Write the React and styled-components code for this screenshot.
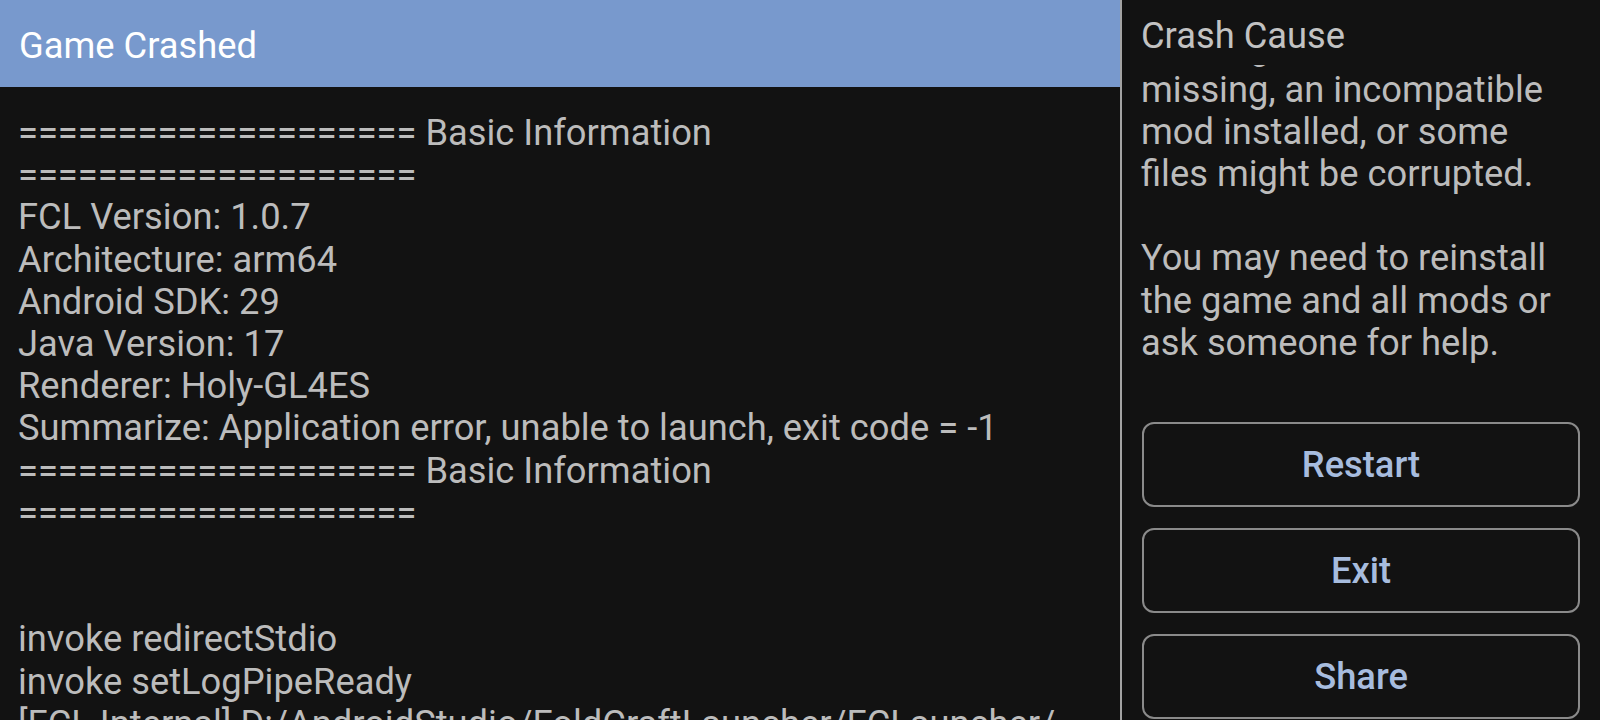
import styled, { createGlobalStyle } from "styled-components";

const GlobalStyle = createGlobalStyle`
  html, body {
    margin: 0;
    padding: 0;
    background: #121212;
    overflow: hidden;
  }

  body {
    font-family: Roboto, "Noto Sans", "Liberation Sans", sans-serif;
  }
`;

const Screen = styled.div`
  display: flex;
  width: 1600px;
  height: 720px;
  background: #121212;
  color: #bcbcbc;
  font-size: 36.3px;
  line-height: 42.2px;
`;

const LeftPane = styled.section`
  width: 1120px;
  display: flex;
  flex-direction: column;
  min-width: 0;
`;

const Toolbar = styled.header`
  height: 87px;
  box-sizing: border-box;
  padding: 6px 0 0 19px;
  display: flex;
  align-items: center;
  background: #7899cd;
  color: #ffffff;
  flex-shrink: 0;
`;

const LogText = styled.pre`
  flex: 1;
  min-height: 0;
  margin: 0;
  padding: 25px 30px 0 18px;
  overflow: hidden;
  white-space: pre-wrap;
  font-family: inherit;
  font-size: inherit;
  line-height: inherit;
  color: #bcbcbc;
`;

const SidePane = styled.aside`
  flex: 1;
  display: flex;
  flex-direction: column;
  border-left: 2px solid #a3a3a3;
  box-sizing: border-box;
  padding: 15px 20px 1px 18px;
  min-width: 0;
`;

const SideTitle = styled.div`
  color: #c2c2c2;
  flex-shrink: 0;
  padding-left: 1px;
`;

const CauseScroll = styled.div`
  flex: 1;
  min-height: 0;
  margin-top: 8px;
  overflow: hidden;
  display: flex;
  flex-direction: column;
  justify-content: flex-end;
  padding-left: 1px;
`;

const CauseText = styled.p`
  margin: 0;
  flex-shrink: 0;
  white-space: pre-line;
  color: #bcbcbc;
`;

const ButtonStack = styled.div`
  display: flex;
  flex-direction: column;
  gap: 21px;
  margin-top: 58px;
  padding-left: 2px;
  flex-shrink: 0;
`;

const OutlineButton = styled.button`
  height: 85px;
  box-sizing: border-box;
  border: 2px solid #8a8a8a;
  border-radius: 12px;
  background: transparent;
  color: #a7bcde;
  font-family: inherit;
  font-size: 36.3px;
  font-weight: 500;
  cursor: pointer;
`;

const logLines = [
  "==================== Basic Information ====================",
  "FCL Version: 1.0.7",
  "Architecture: arm64",
  "Android SDK: 29",
  "Java Version: 17",
  "Renderer: Holy-GL4ES",
  "Summarize: Application error, unable to launch, exit code = -1",
  "==================== Basic Information ====================",
  "",
  "",
  "invoke redirectStdio",
  "invoke setLogPipeReady",
  "[FCL Internal] D:/AndroidStudio/FoldCraftLauncher/FCLauncher/",
  "src/main/jni/fcl/fcl_bridge.c:48",
];

const causeText = `Unable to determine why the game
crashed. It is possible that Java or
a config file is
missing, an incompatible
mod installed, or some
files might be corrupted.

You may need to reinstall
the game and all mods or
ask someone for help.`;

const actions = ["Restart", "Exit", "Share"];

const App = () => {
  return (
    <>
      <GlobalStyle />
      <Screen>
        <LeftPane>
          <Toolbar>Game Crashed</Toolbar>
          <LogText>{logLines.join("\n")}</LogText>
        </LeftPane>
        <SidePane>
          <SideTitle>Crash Cause</SideTitle>
          <CauseScroll>
            <CauseText>{causeText}</CauseText>
          </CauseScroll>
          <ButtonStack>
            {actions.map((label) => (
              <OutlineButton key={label}>{label}</OutlineButton>
            ))}
          </ButtonStack>
        </SidePane>
      </Screen>
    </>
  );
};

export default App;
